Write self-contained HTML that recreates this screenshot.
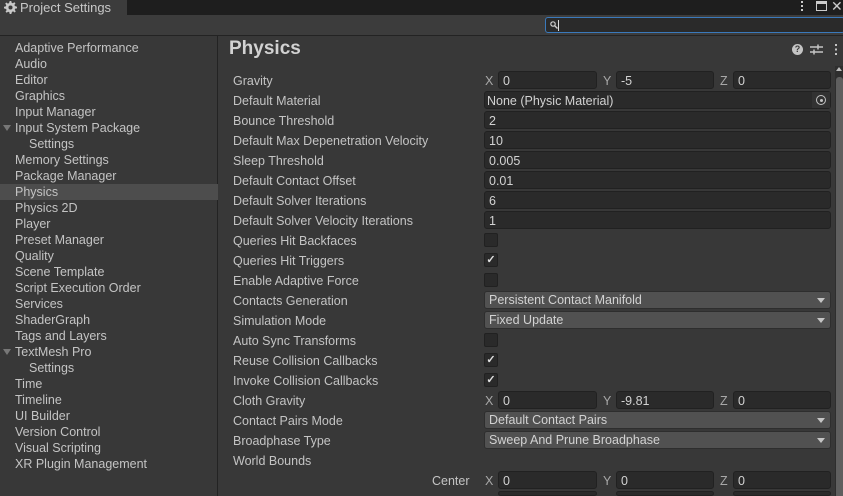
<!DOCTYPE html>
<html><head><meta charset="utf-8">
<style>
*{margin:0;padding:0;box-sizing:border-box}
html{width:843px;height:496px;overflow:hidden}
body{width:843px;height:496px;overflow:hidden;background:#383838;font-family:"Liberation Sans",sans-serif;font-size:12.5px;color:#c4c4c4;position:relative}
.a{position:absolute;white-space:nowrap}
.top{left:0;top:0;width:843px;height:15px;background:#1e1e1e}
.tab{left:0;top:0;width:127px;height:15px;background:#3c3c3c;color:#c8c8c8;font-size:13px;line-height:15px;padding-left:20px}
.tb{left:0;top:15px;width:843px;height:21px;background:#3c3c3c;border-bottom:1px solid #232323}
.search{left:545px;top:17px;width:300px;height:16px;border:1px solid #3a79bb;border-radius:3px;background:#2a2a2a}
.left{left:0;top:36px;width:218px;height:460px;background:#383838;border-right:1px solid #232323}
.li{left:15px;height:16px;line-height:16px}
.sel{left:0;top:184px;width:218px;height:16px;background:#4d4d4d}
.lab{left:233px;line-height:20px;height:20px;margin-top:1px}
.f{height:18px;background:#2a2a2a;border:1px solid #212121;border-radius:3px;line-height:17px;padding-left:4px;padding-top:1px;color:#d2d2d2}
.dd{height:18px;background:#515151;border:1px solid #2e2e2e;border-radius:3px;line-height:16px;padding-left:4px;color:#d2d2d2}
.dd:after{content:"";position:absolute;right:5px;top:6px;border-left:4px solid transparent;border-right:4px solid transparent;border-top:5px solid #c4c4c4}
.cb{left:484px;width:14px;height:14px;background:#2a2a2a;border:1px solid #212121;border-radius:2px;color:#e0e0e0;font-size:11px;line-height:12px;text-align:center;font-weight:bold}
.x{line-height:20px;color:#a8a8a8;margin-top:1px}
</style></head><body>
<div class="a top"></div>
<div class="a tab"><svg style="position:absolute;left:4px;top:1px" width="13" height="13" viewBox="0 0 16 16"><path fill="#c8c8c8" d="M7 0h2l.4 2.2 1.5.6 1.8-1.3 1.4 1.4-1.3 1.8.6 1.5L16 7v2l-2.2.4-.6 1.5 1.3 1.8-1.4 1.4-1.8-1.3-1.5.6L9 16H7l-.4-2.2-1.5-.6-1.8 1.3-1.4-1.4 1.3-1.8-.6-1.5L0 9V7l2.2-.4.6-1.5-1.3-1.8 1.4-1.4 1.8 1.3 1.5-.6zM8 5.5A2.5 2.5 0 1 0 8 10.5 2.5 2.5 0 1 0 8 5.5z"/></svg>Project Settings</div>
<div class="a" style="left:801px;top:1px;width:2px;height:11px;background:repeating-linear-gradient(#ccc 0 2px,transparent 2px 4px)"></div>
<div class="a" style="left:816px;top:1px;width:11px;height:10px;border:1.5px solid #ccc;border-top-width:3px"></div>
<div class="a" style="left:831px;top:-2px;color:#ccc;font-size:14px">✕</div>
<div class="a tb"></div>
<div class="a search"><svg style="position:absolute;left:4px;top:3px" width="8" height="8" viewBox="0 0 8 8"><circle cx="3" cy="3" r="2.2" fill="none" stroke="#ccc" stroke-width="1.2"/><path d="M4.6 4.6L7.5 7.5" stroke="#ccc" stroke-width="1.4"/></svg><div class="a" style="left:12px;top:2px;width:1px;height:11px;background:#ddd"></div></div>
<div class="a left"></div>
<div class="a sel"></div>
<div class="a li" style="top:40px">Adaptive Performance</div>
<div class="a li" style="top:56px">Audio</div>
<div class="a li" style="top:72px">Editor</div>
<div class="a li" style="top:88px">Graphics</div>
<div class="a li" style="top:104px">Input Manager</div>
<div class="a li" style="top:120px">Input System Package</div>
<div class="a li" style="top:136px;left:29px">Settings</div>
<div class="a li" style="top:152px">Memory Settings</div>
<div class="a li" style="top:168px">Package Manager</div>
<div class="a li" style="top:184px">Physics</div>
<div class="a li" style="top:200px">Physics 2D</div>
<div class="a li" style="top:216px">Player</div>
<div class="a li" style="top:232px">Preset Manager</div>
<div class="a li" style="top:248px">Quality</div>
<div class="a li" style="top:264px">Scene Template</div>
<div class="a li" style="top:280px">Script Execution Order</div>
<div class="a li" style="top:296px">Services</div>
<div class="a li" style="top:312px">ShaderGraph</div>
<div class="a li" style="top:328px">Tags and Layers</div>
<div class="a li" style="top:344px">TextMesh Pro</div>
<div class="a li" style="top:360px;left:29px">Settings</div>
<div class="a li" style="top:376px">Time</div>
<div class="a li" style="top:392px">Timeline</div>
<div class="a li" style="top:408px">UI Builder</div>
<div class="a li" style="top:424px">Version Control</div>
<div class="a li" style="top:440px">Visual Scripting</div>
<div class="a li" style="top:456px">XR Plugin Management</div>
<div class="a" style="left:3px;top:125px;border-left:4px solid transparent;border-right:4px solid transparent;border-top:6px solid #777"></div>
<div class="a" style="left:3px;top:349px;border-left:4px solid transparent;border-right:4px solid transparent;border-top:6px solid #777"></div>

<div class="a" style="left:229px;top:38px;font-size:19px;font-weight:bold;color:#d2d2d2">Physics</div>
<div class="a" style="left:792px;top:44px;width:11px;height:11px;border-radius:50%;background:#c4c4c4;color:#383838;font-size:9px;font-weight:bold;line-height:11px;text-align:center">?</div>
<svg class="a" style="left:810px;top:43px" width="13" height="13" viewBox="0 0 13 13"><path d="M0 4h13M0 9h13" stroke="#c4c4c4" stroke-width="1.5"/><path d="M8 1.5v5M4 6.5v5" stroke="#c4c4c4" stroke-width="1.5"/></svg>
<div class="a" style="left:835px;top:44px;width:2px;height:11px;background:repeating-linear-gradient(#c4c4c4 0 2px,transparent 2px 4.5px)"></div>
<div class="a" style="left:835px;top:66px;width:8px;height:430px;background:#2e2e2e"></div>
<div class="a" style="left:836px;top:77px;width:7px;height:419px;background:#5f5f5f;border-radius:3px 3px 0 0"></div>
<div class="a" style="left:836px;top:67px;border-left:3px solid transparent;border-right:3px solid transparent;border-bottom:4px solid #bbb"></div>

<div class="a lab" style="top:70px">Gravity</div>
<div class="a lab" style="top:90px">Default Material</div>
<div class="a lab" style="top:110px">Bounce Threshold</div>
<div class="a lab" style="top:130px">Default Max Depenetration Velocity</div>
<div class="a lab" style="top:150px">Sleep Threshold</div>
<div class="a lab" style="top:170px">Default Contact Offset</div>
<div class="a lab" style="top:190px">Default Solver Iterations</div>
<div class="a lab" style="top:210px">Default Solver Velocity Iterations</div>
<div class="a lab" style="top:230px">Queries Hit Backfaces</div>
<div class="a lab" style="top:250px">Queries Hit Triggers</div>
<div class="a lab" style="top:270px">Enable Adaptive Force</div>
<div class="a lab" style="top:290px">Contacts Generation</div>
<div class="a lab" style="top:310px">Simulation Mode</div>
<div class="a lab" style="top:330px">Auto Sync Transforms</div>
<div class="a lab" style="top:350px">Reuse Collision Callbacks</div>
<div class="a lab" style="top:370px">Invoke Collision Callbacks</div>
<div class="a lab" style="top:390px">Cloth Gravity</div>
<div class="a lab" style="top:410px">Contact Pairs Mode</div>
<div class="a lab" style="top:430px">Broadphase Type</div>
<div class="a lab" style="top:450px">World Bounds</div>
<div class="a lab" style="top:470px;left:432px">Center</div>

<div class="a x" style="left:485px;top:70px">X</div><div class="a f" style="left:498px;top:71px;width:99px">0</div>
<div class="a x" style="left:603px;top:70px">Y</div><div class="a f" style="left:616px;top:71px;width:98px">-5</div>
<div class="a x" style="left:720px;top:70px">Z</div><div class="a f" style="left:733px;top:71px;width:98px">0</div>
<div class="a f" style="left:484px;top:91px;width:347px;padding-left:2px">None (Physic Material)<div class="a" style="right:0;top:0;width:18px;height:16px;background:#323232"><div class="a" style="left:4px;top:3px;width:10px;height:10px;border:1.3px solid #c4c4c4;border-radius:50%"></div><div class="a" style="left:7.5px;top:6.5px;width:3px;height:3px;background:#c4c4c4;border-radius:50%"></div></div></div>
<div class="a f" style="left:484px;top:111px;width:347px">2</div>
<div class="a f" style="left:484px;top:131px;width:347px">10</div>
<div class="a f" style="left:484px;top:151px;width:347px">0.005</div>
<div class="a f" style="left:484px;top:171px;width:347px">0.01</div>
<div class="a f" style="left:484px;top:191px;width:347px">6</div>
<div class="a f" style="left:484px;top:211px;width:347px">1</div>
<div class="a cb" style="top:233px"></div>
<div class="a cb" style="top:253px">✓</div>
<div class="a cb" style="top:273px"></div>
<div class="a dd" style="left:484px;top:291px;width:347px">Persistent Contact Manifold</div>
<div class="a dd" style="left:484px;top:311px;width:347px">Fixed Update</div>
<div class="a cb" style="top:333px"></div>
<div class="a cb" style="top:353px">✓</div>
<div class="a cb" style="top:373px">✓</div>
<div class="a x" style="left:485px;top:390px">X</div><div class="a f" style="left:498px;top:391px;width:99px">0</div>
<div class="a x" style="left:603px;top:390px">Y</div><div class="a f" style="left:616px;top:391px;width:98px">-9.81</div>
<div class="a x" style="left:720px;top:390px">Z</div><div class="a f" style="left:733px;top:391px;width:98px">0</div>
<div class="a dd" style="left:484px;top:411px;width:347px">Default Contact Pairs</div>
<div class="a dd" style="left:484px;top:431px;width:347px">Sweep And Prune Broadphase</div>
<div class="a x" style="left:485px;top:470px">X</div><div class="a f" style="left:498px;top:471px;width:99px">0</div>
<div class="a x" style="left:603px;top:470px">Y</div><div class="a f" style="left:616px;top:471px;width:98px">0</div>
<div class="a x" style="left:720px;top:470px">Z</div><div class="a f" style="left:733px;top:471px;width:98px">0</div>
<div class="a f" style="left:498px;top:491px;width:99px;height:5px"></div>
<div class="a f" style="left:616px;top:491px;width:98px;height:5px"></div>
<div class="a f" style="left:733px;top:491px;width:98px;height:5px"></div>
</body></html>
